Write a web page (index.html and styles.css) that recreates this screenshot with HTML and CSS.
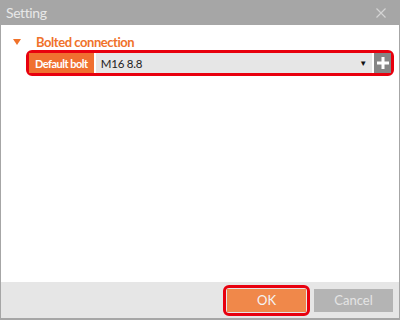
FILE: index.html
```html
<!DOCTYPE html>
<html lang="en">
<head>
  <meta charset="UTF-8" />
  <title>Setting</title>
  <link rel="stylesheet" href="styles.css">
</head>
<body>
  <div class="window">
    <div class="titlebar">
      <span class="title">Setting</span>
      <svg class="close" width="10" height="10" viewBox="0 0 10 10">
        <path d="M0.5 0.5 L9.5 9.5 M9.5 0.5 L0.5 9.5" stroke="#d4d4d4" stroke-width="1.2" />
      </svg>
    </div>

    <div class="content">
      <div class="section-head">
        <span class="caret"></span>
        <span class="section-title">Bolted connection</span>
      </div>

      <div class="field highlight">
        <span class="field-label">Default bolt</span>
        <div class="select">
          <span>M16 8.8</span>
          <span class="arrow">&#9660;</span>
        </div>
        <span class="add-btn">
          <svg width="12" height="12" viewBox="0 0 12 12">
            <rect x="4.5" y="0" width="3" height="12" fill="#fff" />
            <rect x="0" y="4.5" width="12" height="3" fill="#fff" />
          </svg>
        </span>
      </div>
    </div>

    <div class="footer">
      <div class="highlight ok-wrap">
        <button class="btn btn-ok">OK</button>
      </div>
      <button class="btn btn-cancel">Cancel</button>
    </div>
  </div>
</body>
</html>
```

FILE: styles.css
```css
* {
  box-sizing: border-box;
}

body, html {
  margin: 0;
  height: 100%;
  font-family: 'Lato', 'Noto Sans', sans-serif;
  background: #fff;
}

.window {
  width: 400px;
  height: 320px;
  display: flex;
  flex-direction: column;
  border: 1px solid #a6a6a6;
  border-top: none;
  border-bottom-width: 2px;
}

.titlebar {
  height: 25px;
  background: #a6a6a6;
  display: flex;
  align-items: center;
  justify-content: space-between;
  padding: 0 14px 0 6px;
  margin: 0 -1px;
}

.title {
  color: #e8e8e8;
  font-size: 14px;
  letter-spacing: -0.4px;
}

.content {
  flex: 1;
  padding: 9px 5px 0 12px;
}

.section-head {
  display: flex;
  align-items: center;
  height: 16px;
}

.caret {
  width: 0;
  height: 0;
  border-left: 4px solid transparent;
  border-right: 4px solid transparent;
  border-top: 6px solid #f0722a;
  margin-right: 15px;
}

.section-title {
  color: #f0722a;
  font-weight: bold;
  font-size: 13px;
  letter-spacing: -0.45px;
}

.highlight {
  border: 3px solid #e8000e;
  border-radius: 6px;
}

.field {
  display: flex;
  align-items: stretch;
  height: 26px;
  margin: 0 0 0 13px;
  padding: 0;
}

.field-label {
  background: #f07030;
  color: #fff;
  font-weight: bold;
  font-size: 11px;
  letter-spacing: -0.5px;
  display: flex;
  align-items: center;
  padding: 0 6px;
  margin-right: 2px;
}

.select {
  flex: 1;
  background: #e6e6e6;
  display: flex;
  align-items: center;
  justify-content: space-between;
  padding: 0 5px 0 5px;
  font-size: 11.5px;
  letter-spacing: -0.2px;
  color: #222;
}

.arrow {
  font-size: 8px;
  color: #111;
}

.add-btn {
  width: 17px;
  background: #868686;
  margin-left: 2px;
  display: flex;
  align-items: center;
  justify-content: center;
}

.footer {
  height: 36px;
  background: #e6e6e6;
  display: flex;
  align-items: center;
  justify-content: flex-end;
  gap: 4px;
  padding-right: 6px;
}

.ok-wrap {
  padding: 1px;
  border-radius: 6px;
}

.btn {
  width: 79px;
  height: 23px;
  border: none;
  font-family: 'Lato', 'Noto Sans', sans-serif;
  font-size: 13px;
  color: #f4f4f4;
  display: block;
}

.btn-ok {
  background: #f0884a;
}

.btn-cancel {
  background: #b4b4b4;
  color: #e4e4e4;
}
```
